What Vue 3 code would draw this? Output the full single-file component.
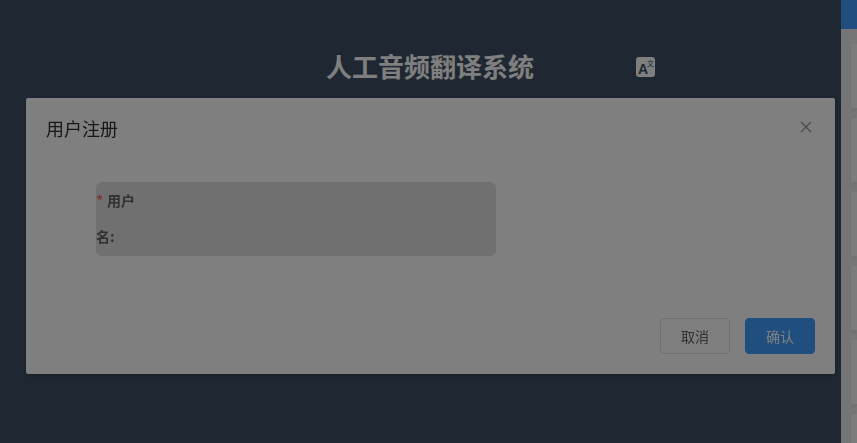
<script setup>
const cards = [1, 2, 3, 4, 5, 6]
</script>

<template>
  <div class="page">
    <div class="login">
      <div class="title-row">
        <h3 class="title">人工音频翻译系统</h3>
        <div class="lang-btn">
          <span class="lang-a">A</span>
          <span class="lang-zh">文</span>
        </div>
      </div>
    </div>
    <div class="side">
      <div class="side-head"></div>
      <div class="side-list">
        <div v-for="c in cards" :key="c" class="side-card"></div>
      </div>
    </div>

    <div class="dialog-wrap">
      <div class="dialog">
        <div class="dialog-header">
          <span class="dialog-title">用户注册</span>
          <svg class="close" viewBox="0 0 12 12" width="12" height="12">
            <path d="M1 1 L11 11 M11 1 L1 11" stroke="#909399" stroke-width="1.2" fill="none" />
          </svg>
        </div>
        <div class="dialog-body">
          <div class="form-item">
            <label class="form-label"><span class="req">*</span>用户名:</label>
          </div>
        </div>
        <div class="dialog-footer">
          <button class="btn">取消</button>
          <button class="btn primary">确认</button>
        </div>
      </div>
    </div>
    <div class="mask"></div>
  </div>
</template>

<style scoped>
.page {
  display: flex;
  width: 857px;
  height: 443px;
  overflow: hidden;
  font-family: "Noto Sans CJK SC", "Liberation Sans", sans-serif;
}

.login {
  flex: 1;
  background: #3e5064;
}

.title-row {
  display: flex;
  align-items: center;
  padding: 48px 0 0 326px;
}

.title {
  margin: -1px 0 0;
  width: 310px;
  color: #fff;
  font-size: 26px;
  line-height: 38px;
  font-weight: 700;
}

.lang-btn {
  position: relative;
  width: 19px;
  height: 20px;
  border-radius: 3px;
  background: #fff;
  color: #3e5064;
}

.lang-a {
  position: absolute;
  left: 2px;
  top: 4px;
  font-size: 14px;
  line-height: 16px;
  font-weight: 700;
  font-family: "Liberation Sans", sans-serif;
}

.lang-zh {
  position: absolute;
  right: 1px;
  top: 2px;
  font-size: 7px;
  line-height: 8px;
}

.side {
  width: 16px;
  background: #ececec;
}

.side-head {
  height: 29px;
  background: #409eff;
}

.side-list {
  display: flex;
  flex-direction: column;
  gap: 10px;
  padding: 15px 0 0 10px;
}

.side-card {
  flex: none;
  height: 64px;
  background: #f8f8f8;
  box-shadow: 0 2px 4px rgba(0, 0, 0, 0.08);
}

.dialog-wrap {
  position: fixed;
  top: 98px;
  left: 26px;
}

.dialog {
  display: flex;
  flex-direction: column;
  width: 809px;
  height: 276px;
  border-radius: 2px;
  background: #fff;
  box-shadow: 0 1px 3px rgba(0, 0, 0, 0.3);
}

.dialog-header {
  display: flex;
  justify-content: space-between;
  align-items: flex-start;
  height: 27px;
  padding: 18px 23px 0 20px;
}

.dialog-title {
  color: #303133;
  font-size: 18px;
  line-height: 24px;
}

.close {
  display: block;
  margin-top: 5px;
}

.dialog-body {
  flex: 1;
  padding: 39px 0 0 70px;
}

.form-item {
  width: 400px;
  height: 74px;
  border-radius: 6px;
  background: #e0e0e0;
}

.form-label {
  display: block;
  width: 40px;
  color: #606266;
  font-size: 14px;
  font-weight: 700;
  line-height: 36px;
  white-space: normal;
}

.req {
  margin-right: 4px;
  color: #f56c6c;
}

.dialog-footer {
  display: flex;
  justify-content: flex-end;
  gap: 15px;
  padding: 0 20px 20px;
}

.btn {
  width: 70px;
  height: 36px;
  padding: 0 0 1px;
  border: 1px solid #dcdfe6;
  border-radius: 4px;
  background: #fff;
  color: #606266;
  font-family: inherit;
  font-size: 14px;
}

.btn.primary {
  border-color: #409eff;
  background: #409eff;
  color: #fff;
}

.mask {
  position: fixed;
  inset: 0;
  background: rgba(0, 0, 0, 0.5);
}
</style>
